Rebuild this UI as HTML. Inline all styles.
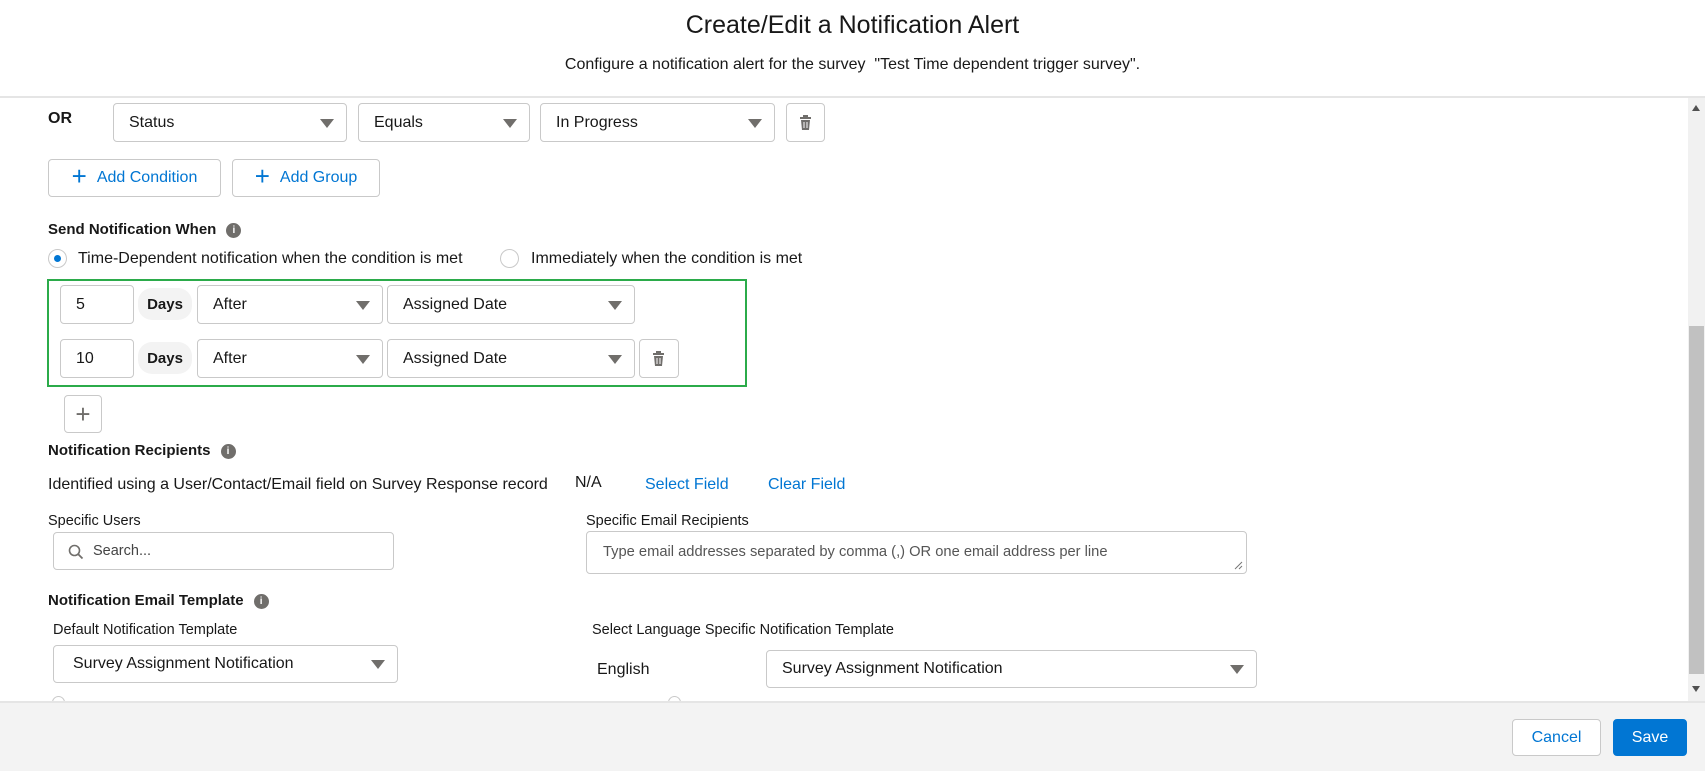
<!DOCTYPE html>
<html><head><meta charset="utf-8"><style>
*{box-sizing:border-box;margin:0;padding:0}
body{width:1705px;height:771px;overflow:hidden;background:#fff;font-family:"Liberation Sans",sans-serif;color:#181818;position:relative;font-size:16px}
.a{position:absolute}
.box{position:absolute;border:1px solid #c9c9c9;border-radius:4px;background:#fff}
.sel{position:absolute;border:1px solid #c9c9c9;border-radius:4px;background:#fff;display:flex;align-items:center;padding-left:15px;font-size:16px;color:#181818}
.sel:after{content:"";position:absolute;right:12px;top:50%;margin-top:-4px;border-left:7px solid transparent;border-right:7px solid transparent;border-top:9px solid #706e6b}
.lbl{position:absolute;font-size:15px;font-weight:bold;color:#181818}
.info{display:inline-block;width:15px;height:15px;border-radius:50%;background:#706e6b;color:#fff;font-size:10px;text-align:center;line-height:15px;font-weight:bold;margin-left:10px;vertical-align:1px}
.days{position:absolute;background:#f3f3f3;border-radius:14px;font-weight:bold;font-size:15px;display:flex;align-items:center;justify-content:center}
.btn{position:absolute;border:1px solid #c9c9c9;border-radius:4px;background:#fff;display:flex;align-items:center;justify-content:center;color:#0176d3;font-size:16px}
.link{position:absolute;color:#0176d3;font-size:16px}
</style></head><body>
<div class="a" style="left:0;top:11px;width:1705px;text-align:center;font-size:25px">Create/Edit a Notification Alert</div>
<div class="a" style="left:0;top:56px;width:1705px;text-align:center;font-size:16px">Configure a notification alert for the survey&nbsp; "Test Time dependent trigger survey".</div>
<div class="a" style="left:0;top:96px;width:1705px;height:2px;background:#e5e5e5"></div>

<div class="a" style="left:1688px;top:98px;width:17px;height:603px;background:#f1f1f1"></div>
<div class="a" style="left:1689px;top:326px;width:15px;height:348px;background:#c1c1c1"></div>
<div class="a" style="left:1692px;top:105px;border-left:4px solid transparent;border-right:4px solid transparent;border-bottom:6px solid #505050"></div>
<div class="a" style="left:1692px;top:686px;border-left:4px solid transparent;border-right:4px solid transparent;border-top:6px solid #505050"></div>

<div class="lbl" style="left:48px;top:110px;font-size:16px">OR</div>
<div class="sel" style="left:113px;top:103px;width:234px;height:39px">Status</div>
<div class="sel" style="left:358px;top:103px;width:172px;height:39px">Equals</div>
<div class="sel" style="left:540px;top:103px;width:235px;height:39px">In Progress</div>
<div class="box" style="left:786px;top:103px;width:39px;height:39px"><svg width="37" height="37" viewBox="0 0 37 37"><path d="M13 13h11v2H13zM16 11h5v2h-5zM14 16h9l-1 10h-7z" fill="#706e6b"/><path d="M17 18v6M20 18v6" stroke="#fff" stroke-width="1"/></svg></div>

<div class="btn" style="left:48px;top:159px;width:173px;height:38px"><span style="font-size:26px;font-weight:300;margin-right:10px;margin-top:-3px">+</span>Add Condition</div>
<div class="btn" style="left:232px;top:159px;width:148px;height:38px"><span style="font-size:26px;font-weight:300;margin-right:10px;margin-top:-3px">+</span>Add Group</div>

<div class="lbl" style="left:48px;top:221px">Send Notification When<span class="info">i</span></div>
<div class="a" style="left:48px;top:249px;width:19px;height:19px;border:1px solid #c9c9c9;border-radius:50%"><div class="a" style="left:5px;top:5px;width:7px;height:7px;border-radius:50%;background:#0176d3"></div></div>
<div class="a" style="left:78px;top:250px">Time-Dependent notification when the condition is met</div>
<div class="a" style="left:500px;top:249px;width:19px;height:19px;border:1px solid #c9c9c9;border-radius:50%"></div>
<div class="a" style="left:531px;top:250px">Immediately when the condition is met</div>

<div class="a" style="left:47px;top:279px;width:700px;height:108px;border:2px solid #2bab4a"></div>
<div class="box" style="left:60px;top:285px;width:74px;height:39px;padding:10px 15px">5</div>
<div class="days" style="left:138px;top:288px;width:54px;height:32px">Days</div>
<div class="sel" style="left:197px;top:285px;width:186px;height:39px">After</div>
<div class="sel" style="left:387px;top:285px;width:248px;height:39px">Assigned Date</div>
<div class="box" style="left:60px;top:339px;width:74px;height:39px;padding:10px 15px">10</div>
<div class="days" style="left:138px;top:342px;width:54px;height:32px">Days</div>
<div class="sel" style="left:197px;top:339px;width:186px;height:39px">After</div>
<div class="sel" style="left:387px;top:339px;width:248px;height:39px">Assigned Date</div>
<div class="box" style="left:639px;top:339px;width:40px;height:39px"><svg width="38" height="37" viewBox="0 0 38 37"><path d="M13 13h11v2H13zM16 11h5v2h-5zM14 16h9l-1 10h-7z" fill="#706e6b"/><path d="M17 18v6M20 18v6" stroke="#fff" stroke-width="1"/></svg></div>
<div class="box" style="left:64px;top:395px;width:38px;height:38px;display:flex;align-items:center;justify-content:center;font-size:26px;color:#706e6b">+</div>

<div class="lbl" style="left:48px;top:442px">Notification Recipients<span class="info">i</span></div>
<div class="a" style="left:48px;top:476px">Identified using a User/Contact/Email field on Survey Response record</div>
<div class="a" style="left:575px;top:474px">N/A</div>
<div class="link" style="left:645px;top:476px">Select Field</div>
<div class="link" style="left:768px;top:476px">Clear Field</div>

<div class="a" style="left:48px;top:513px;font-size:14.5px">Specific Users</div>
<div class="box" style="left:53px;top:532px;width:341px;height:38px"><svg class="a" style="left:14px;top:11px" width="16" height="16" viewBox="0 0 16 16"><circle cx="6.5" cy="6.5" r="5" fill="none" stroke="#706e6b" stroke-width="1.6"/><path d="M10 10l4.5 4.5" stroke="#706e6b" stroke-width="1.8"/></svg><span class="a" style="left:39px;top:10px;font-size:14.5px;color:#444">Search...</span></div>
<div class="a" style="left:586px;top:513px;font-size:14.5px">Specific Email Recipients</div>
<div class="box" style="left:586px;top:531px;width:661px;height:43px"><span class="a" style="left:16px;top:12px;font-size:14.7px;color:#555">Type email addresses separated by comma (,) OR one email address per line</span><svg class="a" style="right:3px;bottom:3px" width="9" height="9"><path d="M1 8L8 1M5 8L8 5" stroke="#777"/></svg></div>

<div class="lbl" style="left:48px;top:592px">Notification Email Template<span class="info">i</span></div>
<div class="a" style="left:53px;top:622px;font-size:14.5px">Default Notification Template</div>
<div class="sel" style="left:53px;top:645px;width:345px;height:38px;padding-left:19px">Survey Assignment Notification</div>
<div class="a" style="left:592px;top:622px;font-size:14.5px">Select Language Specific Notification Template</div>
<div class="a" style="left:597px;top:661px">English</div>
<div class="sel" style="left:766px;top:650px;width:491px;height:38px">Survey Assignment Notification</div>
<div class="a" style="left:52px;top:696px;width:13px;height:13px;border:1px solid #c9c9c9;border-radius:50%"></div>
<div class="a" style="left:668px;top:696px;width:13px;height:13px;border:1px solid #c9c9c9;border-radius:50%"></div>

<div class="a" style="left:0;top:701px;width:1705px;height:70px;background:#f3f3f3;border-top:2px solid #e5e5e5"></div>
<div class="btn" style="left:1512px;top:719px;width:89px;height:37px">Cancel</div>
<div class="btn" style="left:1613px;top:719px;width:74px;height:37px;background:#0176d3;border-color:#0176d3;color:#fff">Save</div>
</body></html>
